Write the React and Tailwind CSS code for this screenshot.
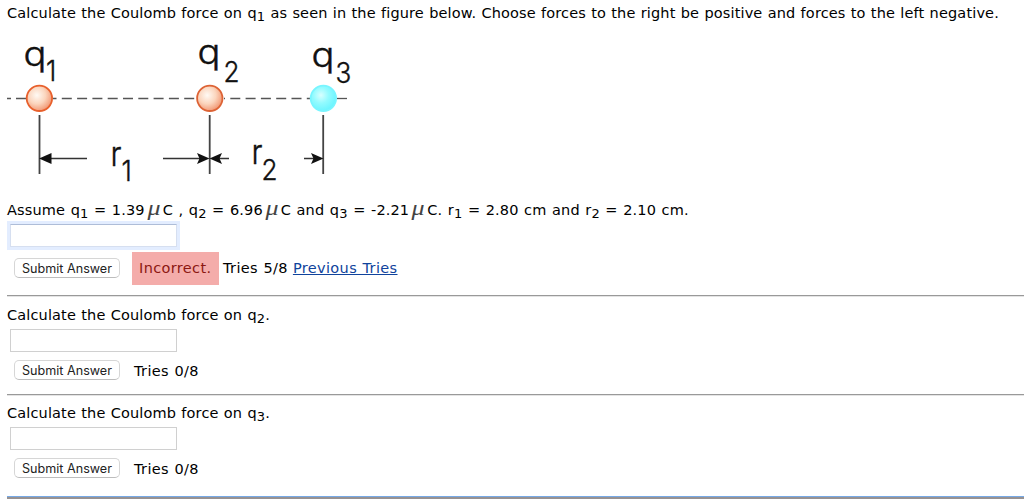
import React, { useState } from 'react';

function Sub({ children }) {
  return <sub className="static align-[-3px] text-[13px] leading-none">{children}</sub>;
}

// Micro sign in slanted math style
function Mu() {
  return (
    <span className="inline-block w-[18px] scale-x-130 text-center font-['Liberation_Serif',serif] text-[20px] italic leading-none tracking-normal text-[#444]">
      μ
    </span>
  );
}

function Charge({ cx, stroke, fill }) {
  return <circle cx={cx} cy="98.3" r="12.7" fill={`url(#${fill})`} stroke={stroke} strokeWidth="1.8" />;
}

function Label({ x, y, subX, subY, name, sub }) {
  return (
    <g className="font-['Inter',sans-serif] font-light tracking-normal" fill="#111" stroke="#111" strokeWidth="0.4">
      <text transform={`translate(${x} ${y}) scale(${name === 'q' ? 1.12 : 0.9} 1)`} fontSize="34">{name}</text>
      <text transform={`translate(${subX} ${subY}) scale(0.9 1)`} fontSize="29">{sub}</text>
    </g>
  );
}

function ChargeFigure() {
  return (
    <svg className="block" width="360" height="170" viewBox="0 27 360 170">
      <defs>
        <radialGradient id="orange" cx="0.4" cy="0.38" r="0.62">
          <stop offset="0" stopColor="#fffaf4" />
          <stop offset="0.55" stopColor="#fbd5bd" />
          <stop offset="1" stopColor="#f29b78" />
        </radialGradient>
        <radialGradient id="cyan" cx="0.4" cy="0.38" r="0.62">
          <stop offset="0" stopColor="#d8ffff" />
          <stop offset="0.5" stopColor="#93fbff" />
          <stop offset="1" stopColor="#6df5ff" />
        </radialGradient>
      </defs>

      {/* Axis */}
      <g stroke="#555" strokeWidth="1.3">
        <path d="M7 98.5h4M16 98.5h11" />
        <path d="M53 98.5H196" strokeDasharray="10 5.3" strokeDashoffset="6.5" />
        <path d="M224 98.5H311" strokeDasharray="10 5.3" strokeDashoffset="9" />
        <path d="M337 98.5h10" />
      </g>

      <Charge cx="39.4" stroke="#e8602c" fill="orange" />
      <Charge cx="209.8" stroke="#dd6335" fill="orange" />
      <Charge cx="323.4" stroke="#79f5ff" fill="cyan" />

      <Label x="23.5" y="66" subX="46" subY="81" name="q" sub="1" />
      <Label x="197.5" y="64" subX="223.5" subY="82" name="q" sub="2" />
      <Label x="311.5" y="67" subX="335.5" subY="82.5" name="q" sub="3" />
      <Label x="110.500" y="166" subX="121.500" subY="181" name="r" sub="1" />
      <Label x="251.500" y="164" subX="261.500" subY="180" name="r" sub="2" />

      {/* Distance markers */}
      <g stroke="#444" strokeWidth="1.8">
        <path d="M39.5 115V174M209.7 115V174M323.2 115V174" />
      </g>
      <g stroke="#333" strokeWidth="1.3">
        <path d="M48 158.5H87M163 158.5H200M218 158.5H229M304 158.5H314" />
      </g>
      <g fill="#111">
        <path d="M39 158.5L51.500 153V164Z" />
        <path d="M209.500 158.500L197 153L199.500 158.500L197 164Z" />
        <path d="M209.500 158.500L222 153L219.500 158.500L222 164Z" />
        <path d="M323.500 158.500L311 153L313.500 158.500L311 164Z" />
      </g>
    </svg>
  );
}

function SubmitButton() {
  return (
    <button
      type="submit"
      className="ml-[7px] h-5 w-[106px] shrink-0 whitespace-nowrap rounded-[5px] border border-[#d6d6d6] border-b-[#bdbdbd] bg-white pt-px font-['Inter',sans-serif] text-[12.6px] leading-[18px] tracking-normal text-[#222] [word-spacing:0]"
    >
      Submit Answer
    </button>
  );
}

function AnswerInput({ focused }) {
  const [value, setValue] = useState('');

  return (
    <input
      type="text"
      value={value}
      onChange={(e) => setValue(e.target.value)}
      className={`ml-[3px] block h-[23px] w-[167px] border bg-white px-1 outline-none ${
        focused ? 'border-[#d6dff0] border-t-[#aebdd8] ring-3 ring-[#e3edff]' : 'border-[#d0d0d0]'
      }`}
    />
  );
}

function Divider() {
  return <hr className="h-[2px] border-t border-b border-t-[#999] border-b-[#e4e4e4]" />;
}

function App() {
  return (
    <div className="h-[499px] overflow-hidden bg-white pl-[7px] font-['DejaVu_Sans',Verdana,sans-serif] text-[14.5px] tracking-[0.14px] text-black [word-spacing:0.5px]">
      <p className="h-[27px] whitespace-nowrap leading-[26px]">
        Calculate the Coulomb force on q<Sub>1</Sub> as seen in the figure below. Choose forces to the right be positive and forces to the left negative.
      </p>
      <div className="-ml-[7px]">
        <ChargeFigure />
      </div>
      <p className="h-[27px] whitespace-nowrap leading-[26px] [word-spacing:0.8px]">
        Assume q<Sub>1</Sub> = 1.39<Mu />C , q<Sub>2</Sub> = 6.96<Mu />C and q<Sub>3</Sub> = -2.21<Mu />C. r<Sub>1</Sub> = 2.80 cm and r<Sub>2</Sub> = 2.10 cm.
      </p>
      <AnswerInput focused />
      <div className="mt-[5px] flex h-[33px] items-center whitespace-nowrap tracking-[0.36px]">
        <div className="-mt-px flex">
          <SubmitButton />
        </div>
        <span className="ml-3 h-[33px] w-[87px] bg-[#f4acaa] pl-[7px] leading-[33px] text-[#8c1812]">Incorrect.</span>
        <span className="ml-1">Tries 5/8</span>
        <a href="#" className="ml-[5px] text-[#10439c] underline">Previous Tries</a>
      </div>

      <div className="mt-[10px]">
        <Divider />
      </div>
      <p className="mt-[5px] h-[27px] leading-[26px]">
        Calculate the Coulomb force on q<Sub>2</Sub>.
      </p>
      <AnswerInput />
      <div className="mt-2 flex h-5 items-center">
        <SubmitButton />
        <span className="ml-[14px] pt-[3px] tracking-[0.36px]">Tries 0/8</span>
      </div>

      <div className="mt-[14px]">
        <Divider />
      </div>
      <p className="mt-1 h-[27px] leading-[26px]">
        Calculate the Coulomb force on q<Sub>3</Sub>.
      </p>
      <AnswerInput />
      <div className="mt-2 flex h-5 items-center">
        <SubmitButton />
        <span className="ml-[14px] pt-[3px] tracking-[0.36px]">Tries 0/8</span>
      </div>
      <div className="mt-[18px] h-[3px] border-t border-[#76a9e6] bg-[#979292]" />
    </div>
  );
}

export default App;
